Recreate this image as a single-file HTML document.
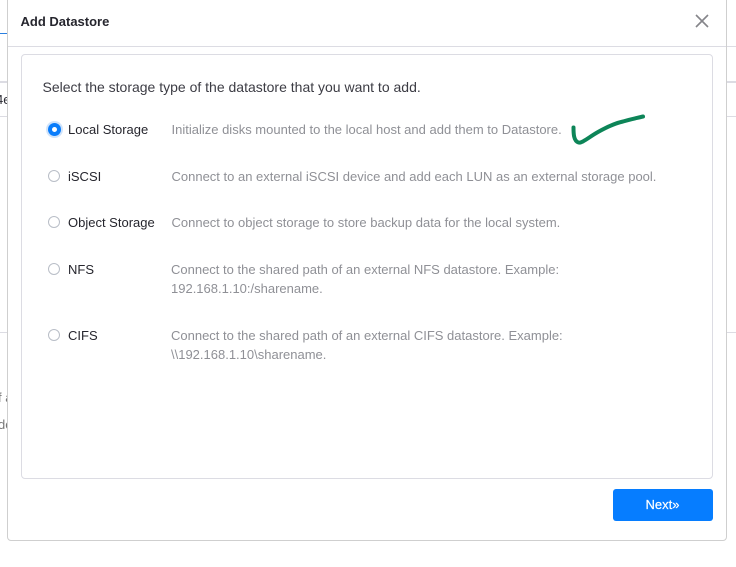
<!DOCTYPE html>
<html><head><meta charset="utf-8">
<style>
html,body{margin:0;padding:0;background:#fff}
body{width:736px;height:567px;position:relative;overflow:hidden;font-family:"Liberation Sans",sans-serif;font-size:13px;color:#2b2b33}
.a{position:absolute;white-space:nowrap}
.l{height:1px;background:#dcdce3}
.lab{left:68px;font-size:13px;line-height:16px;color:#26262e}
.d{left:171.5px;font-size:13px;line-height:19px;color:#8f9096}
.r{left:48px;width:10.4px;height:10.4px;border:1.2px solid #b9bec7;border-radius:50%;background:#fff;box-sizing:content-box}
</style></head><body>
<div class="a l" style="left:0;top:33px;width:7px;background:#2a7fe0"></div>
<div class="a l" style="left:0;top:81px;width:7px;height:2px;background:#dcdce3"></div>
<div class="a l" style="left:0;top:116px;width:7px"></div>
<div class="a l" style="left:0;top:332px;width:7px"></div>
<div class="a l" style="left:727px;top:46px;width:9px"></div>
<div class="a l" style="left:727px;top:81px;width:9px;height:2px"></div>
<div class="a l" style="left:727px;top:116px;width:9px"></div>
<div class="a l" style="left:727px;top:332px;width:9px"></div>
<div class="a" style="left:-4px;top:92px;line-height:16px">4e</div>
<div class="a" style="left:-2px;top:390px;line-height:16px;color:#777">f a</div>
<div class="a" style="left:-2px;top:417px;line-height:16px;color:#777">de</div>

<div class="a" style="left:7px;top:-5px;width:718px;height:544px;background:#fff;border:1px solid #cfcfcf;border-radius:4px"></div>
<div class="a l" style="left:8px;top:46px;width:718px"></div>
<div class="a" style="left:20.5px;top:14px;font-size:13px;font-weight:bold;line-height:15px;color:#26262e">Add Datastore</div>
<svg class="a" style="left:694px;top:13px" width="16" height="16" viewBox="0 0 16 16"><path d="M2 2L14 14M14 2L2 14" stroke="#85858a" stroke-width="1.600" fill="none"/></svg>

<div class="a" style="left:21px;top:54px;width:690px;height:423px;border:1px solid #dcdce3;border-radius:4px;background:#fff"></div>
<div class="a" style="left:42.5px;top:79px;font-size:14px;line-height:17px;color:#3c3c44">Select the storage type of the datastore that you want to add.</div>

<div class="a" style="left:45.800px;top:120.500px;width:17.500px;height:17.500px;border-radius:50%;background:#cfe3fb"></div>
<div class="a" style="left:47.800px;top:122.500px;width:13.500px;height:13.500px;border-radius:50%;background:#0a7dfb"></div>
<div class="a" style="left:51.800px;top:126.500px;width:5.500px;height:5.500px;border-radius:50%;background:#fff"></div>
<div class="a lab" style="top:122px">Local Storage</div>
<div class="a d" style="top:120px">Initialize disks mounted to the local host and add them to Datastore.</div>

<div class="a r" style="top:170px"></div>
<div class="a lab" style="top:169px">iSCSI</div>
<div class="a d" style="top:167px">Connect to an external iSCSI device and add each LUN as an external storage pool.</div>

<div class="a r" style="top:216px"></div>
<div class="a lab" style="top:215px">Object Storage</div>
<div class="a d" style="top:213px">Connect to object storage to store backup data for the local system.</div>

<div class="a r" style="top:263px"></div>
<div class="a lab" style="top:262px">NFS</div>
<div class="a d" style="top:260px;left:171px">Connect to the shared path of an external NFS datastore. Example:<br>192.168.1.10:/sharename.</div>

<div class="a r" style="top:329px"></div>
<div class="a lab" style="top:328px">CIFS</div>
<div class="a d" style="top:326px;left:171px">Connect to the shared path of an external CIFS datastore. Example:<br>\\192.168.1.10\sharename.</div>

<svg class="a" style="left:570px;top:110px" width="78" height="38" viewBox="0 0 78 38"><path d="M3.500 17.500C3.500 23 3.500 31 8.500 32.500C12 33.500 19 27 28 22C36 17.500 44 13.500 53 11.500C60 9.500 67 8 73 6.500" stroke="#0d8558" stroke-width="4" fill="none" stroke-linecap="round" stroke-linejoin="round"/></svg>

<div class="a" style="left:613px;top:489px;width:100px;height:32px;border-radius:3px;background:#067dff"></div>
<div class="a" style="left:645.500px;top:497px;font-size:13px;line-height:16px;color:#fff;-webkit-text-stroke:.2px #fff">Next»</div>
</body></html>
